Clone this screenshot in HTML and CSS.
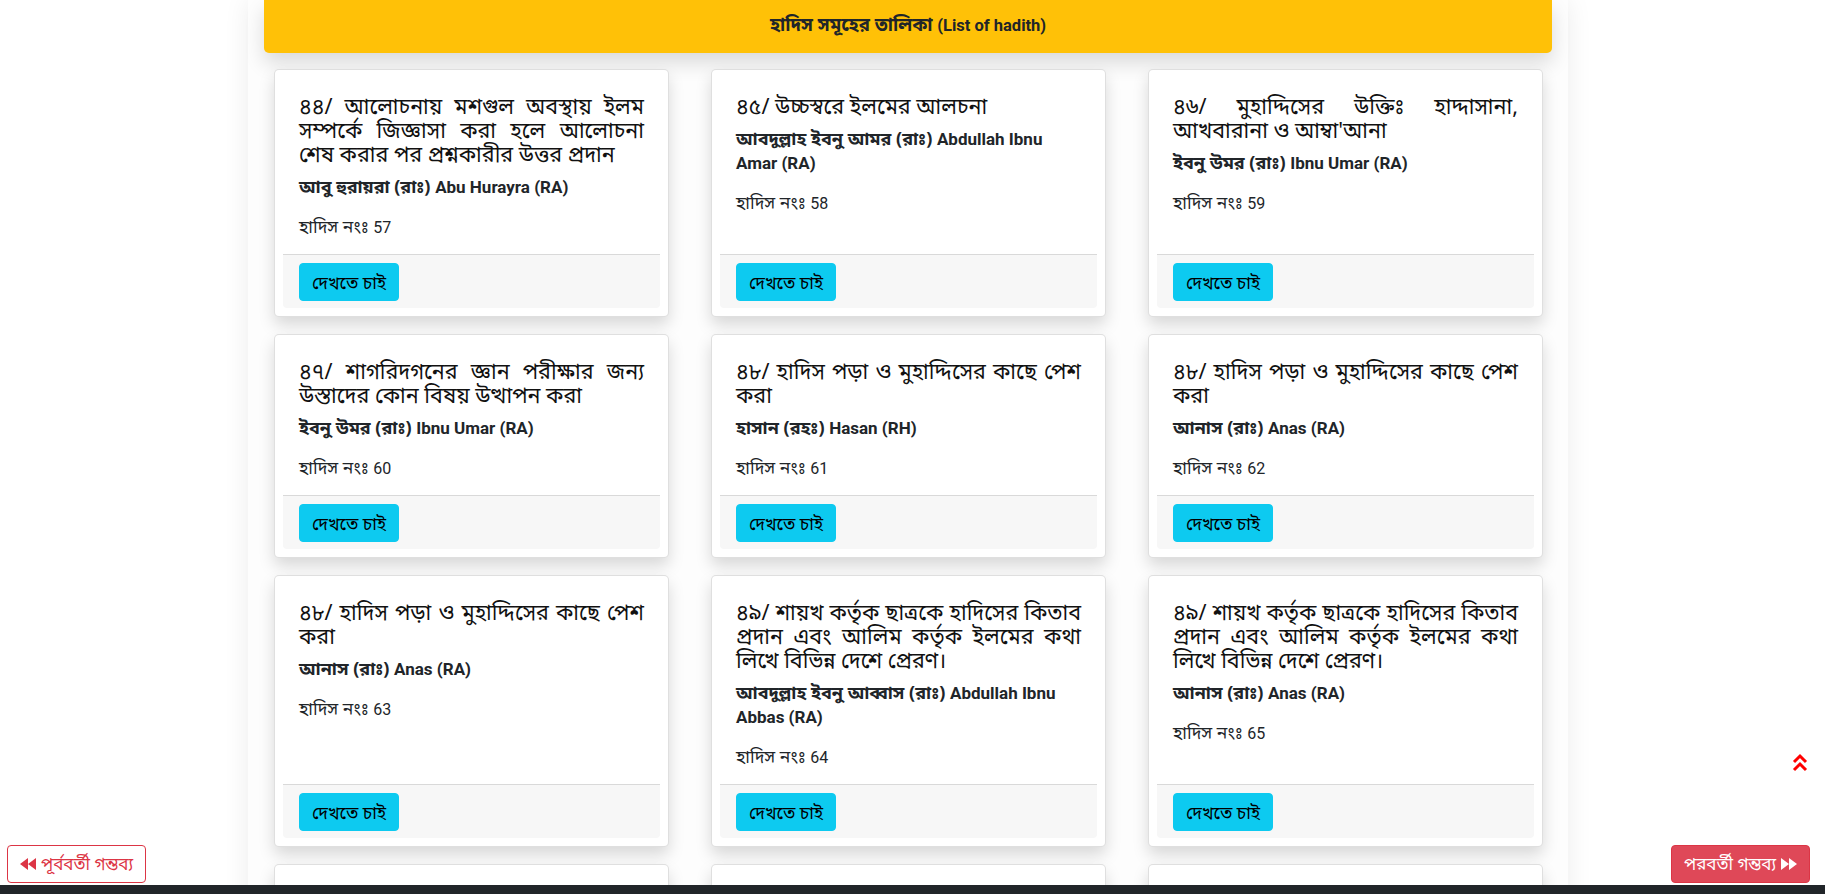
FILE: index.html
```html
<!DOCTYPE html>
<html lang="bn">
<head>
<meta charset="utf-8">
<title>হাদিস সমূহের তালিকা</title>
<link rel="stylesheet" href="styles.css">
</head>
<body>
<main class="container">
  <div class="list-header">হাদিস সমূহের তালিকা <span class="en">(List of hadith)</span></div>
  <div class="grid">
    <div class="card">
      <div class="card-body">
        <h5 class="title">৪৪/ আলোচনায় মশগুল অবস্থায় ইলম সম্পর্কে জিজ্ঞাসা করা হলে আলোচনা শেষ করার পর প্রশ্নকারীর উত্তর প্রদান</h5>
        <p class="narrator">আবু হুরায়রা (রাঃ) <span class="en">Abu Hurayra (RA)</span></p>
        <p class="number">হাদিস নংঃ <span class="en">57</span></p>
      </div>
      <div class="card-footer"><a class="btn-view" href="#">দেখতে চাই</a></div>
    </div>
    <div class="card">
      <div class="card-body">
        <h5 class="title">৪৫/ উচ্চস্বরে ইলমের আলচনা</h5>
        <p class="narrator">আবদুল্লাহ ইবনু আমর (রাঃ) <span class="en">Abdullah Ibnu Amar (RA)</span></p>
        <p class="number">হাদিস নংঃ <span class="en">58</span></p>
      </div>
      <div class="card-footer"><a class="btn-view" href="#">দেখতে চাই</a></div>
    </div>
    <div class="card">
      <div class="card-body">
        <h5 class="title">৪৬/ মুহাদ্দিসের উক্তিঃ হাদ্দাসানা, আখবারানা ও আম্বা'আনা</h5>
        <p class="narrator">ইবনু উমর (রাঃ) <span class="en">Ibnu Umar (RA)</span></p>
        <p class="number">হাদিস নংঃ <span class="en">59</span></p>
      </div>
      <div class="card-footer"><a class="btn-view" href="#">দেখতে চাই</a></div>
    </div>
    <div class="card">
      <div class="card-body">
        <h5 class="title">৪৭/ শাগরিদগনের জ্ঞান পরীক্ষার জন্য উস্তাদের কোন বিষয় উত্থাপন করা</h5>
        <p class="narrator">ইবনু উমর (রাঃ) <span class="en">Ibnu Umar (RA)</span></p>
        <p class="number">হাদিস নংঃ <span class="en">60</span></p>
      </div>
      <div class="card-footer"><a class="btn-view" href="#">দেখতে চাই</a></div>
    </div>
    <div class="card">
      <div class="card-body">
        <h5 class="title">৪৮/ হাদিস পড়া ও মুহাদ্দিসের কাছে পেশ করা</h5>
        <p class="narrator">হাসান (রহঃ) <span class="en">Hasan (RH)</span></p>
        <p class="number">হাদিস নংঃ <span class="en">61</span></p>
      </div>
      <div class="card-footer"><a class="btn-view" href="#">দেখতে চাই</a></div>
    </div>
    <div class="card">
      <div class="card-body">
        <h5 class="title">৪৮/ হাদিস পড়া ও মুহাদ্দিসের কাছে পেশ করা</h5>
        <p class="narrator">আনাস (রাঃ) <span class="en">Anas (RA)</span></p>
        <p class="number">হাদিস নংঃ <span class="en">62</span></p>
      </div>
      <div class="card-footer"><a class="btn-view" href="#">দেখতে চাই</a></div>
    </div>
    <div class="card">
      <div class="card-body">
        <h5 class="title">৪৮/ হাদিস পড়া ও মুহাদ্দিসের কাছে পেশ করা</h5>
        <p class="narrator">আনাস (রাঃ) <span class="en">Anas (RA)</span></p>
        <p class="number">হাদিস নংঃ <span class="en">63</span></p>
      </div>
      <div class="card-footer"><a class="btn-view" href="#">দেখতে চাই</a></div>
    </div>
    <div class="card">
      <div class="card-body">
        <h5 class="title">৪৯/ শায়খ কর্তৃক ছাত্রকে হাদিসের কিতাব প্রদান এবং আলিম কর্তৃক ইলমের কথা লিখে বিভিন্ন দেশে প্রেরণ।</h5>
        <p class="narrator">আবদুল্লাহ ইবনু আব্বাস (রাঃ) <span class="en">Abdullah Ibnu Abbas (RA)</span></p>
        <p class="number">হাদিস নংঃ <span class="en">64</span></p>
      </div>
      <div class="card-footer"><a class="btn-view" href="#">দেখতে চাই</a></div>
    </div>
    <div class="card">
      <div class="card-body">
        <h5 class="title">৪৯/ শায়খ কর্তৃক ছাত্রকে হাদিসের কিতাব প্রদান এবং আলিম কর্তৃক ইলমের কথা লিখে বিভিন্ন দেশে প্রেরণ।</h5>
        <p class="narrator">আনাস (রাঃ) <span class="en">Anas (RA)</span></p>
        <p class="number">হাদিস নংঃ <span class="en">65</span></p>
      </div>
      <div class="card-footer"><a class="btn-view" href="#">দেখতে চাই</a></div>
    </div>
    <div class="card card-partial"></div>
    <div class="card card-partial"></div>
    <div class="card card-partial"></div>
  </div>
</main>

<a class="nav-btn nav-prev" href="#">
  <svg class="nav-icon" viewBox="0 0 16 12" width="16" height="12" aria-hidden="true"><path d="M8 0 L0 6 L8 12 Z M16 0 L8 6 L16 12 Z" fill="currentColor"/></svg>
  <span>পূর্ববর্তী গন্তব্য</span>
</a>
<a class="nav-btn nav-next" href="#">
  <span>পরবর্তী গন্তব্য</span>
  <svg class="nav-icon" viewBox="0 0 16 12" width="16" height="12" aria-hidden="true"><path d="M0 0 L8 6 L0 12 Z M8 0 L16 6 L8 12 Z" fill="currentColor"/></svg>
</a>
<a class="to-top" href="#" aria-label="top">
  <svg viewBox="0 0 16 20" width="16" height="20" aria-hidden="true"><path d="M2 9 L8 3 L14 9 M2 17 L8 11 L14 17" fill="none" stroke="#ff0000" stroke-width="3"/></svg>
</a>
<div class="bottom-bar"></div>
</body>
</html>
```

FILE: styles.css
```css
* { box-sizing: border-box; }

html, body {
  margin: 0;
  padding: 0;
  background: #ffffff;
}

body {
  font-family: "Noto Sans", "Noto Sans Bengali", "Open Sans", sans-serif;
  font-size: 16px;
  line-height: 24px;
  color: #212529;
  overflow: hidden;
}

.en {
  font-family: Roboto, "Noto Sans", sans-serif;
  font-size: 16px;
  line-height: 1;
}

.container {
  width: 1320px;
  margin-left: 248px;
  padding: 0 16px 40px;
  min-height: 1100px;
  background: #fdfdfd;
  box-shadow: 0 0 24px rgba(0, 0, 0, 0.08);
}

.list-header {
  height: 53px;
  padding-top: 12px;
  background: #ffc107;
  border-radius: 0 0 5px 5px;
  text-align: center;
  font-weight: 700;
  font-size: 18.5px;
  line-height: 24px;
  color: #212529;
  box-shadow: 0 10px 20px rgba(0, 0, 0, 0.14);
}

.list-header .en {
  font-size: 16.5px;
}

.grid {
  display: grid;
  grid-template-columns: repeat(3, 395px);
  column-gap: 42px;
  row-gap: 17px;
  margin-top: 16px;
  padding-left: 10px;
}

.card {
  display: flex;
  flex-direction: column;
  background: #ffffff;
  border: 1px solid rgba(0, 0, 0, 0.125);
  border-radius: 5px;
  padding: 8px;
  box-shadow: 0 8px 16px rgba(0, 0, 0, 0.15);
}

.card-partial {
  height: 200px;
}

.card-body {
  flex: 1;
  padding: 16px;
}

.title {
  margin: 0 0 8px;
  font-size: 21.5px;
  line-height: 24px;
  font-weight: 400;
  text-align: justify;
  color: #111;
}

.narrator {
  margin: 0 0 16px;
  font-weight: 700;
  font-size: 18px;
  line-height: 24px;
  color: #212529;
}

.narrator .en {
  font-size: 17px;
}

.number {
  margin: 0;
  font-size: 17.5px;
  line-height: 24px;
}

.card-footer {
  background: #f7f7f7;
  border-top: 1px solid #d9d9d9;
  border-radius: 0 0 4px 4px;
  padding: 8px 16px 7px;
}

.btn-view {
  display: inline-block;
  padding: 6px 12px;
  border: 1px solid #0dcaf0;
  border-radius: 4px;
  background: #0dcaf0;
  color: #000;
  text-decoration: none;
  font-size: 17.5px;
  line-height: 24px;
}

.nav-btn {
  position: fixed;
  bottom: 11px;
  width: 139px;
  height: 38px;
  display: flex;
  align-items: center;
  justify-content: center;
  gap: 5px;
  border: 1px solid #dc3545;
  border-radius: 4px;
  font-size: 17px;
  line-height: 24px;
  text-decoration: none;
}

.nav-prev {
  left: 7px;
  background: #ffffff;
  color: #dc3545;
}

.nav-next {
  right: 15px;
  background: #df4858;
  color: #ffffff;
}

.nav-icon {
  display: block;
  flex: none;
}

.to-top {
  position: fixed;
  right: 17px;
  bottom: 121px;
  display: block;
  width: 16px;
  height: 20px;
}

.to-top svg { display: block; }

.bottom-bar {
  position: fixed;
  left: 0;
  right: 0;
  bottom: 0;
  height: 9px;
  background: #212529;
}
```
